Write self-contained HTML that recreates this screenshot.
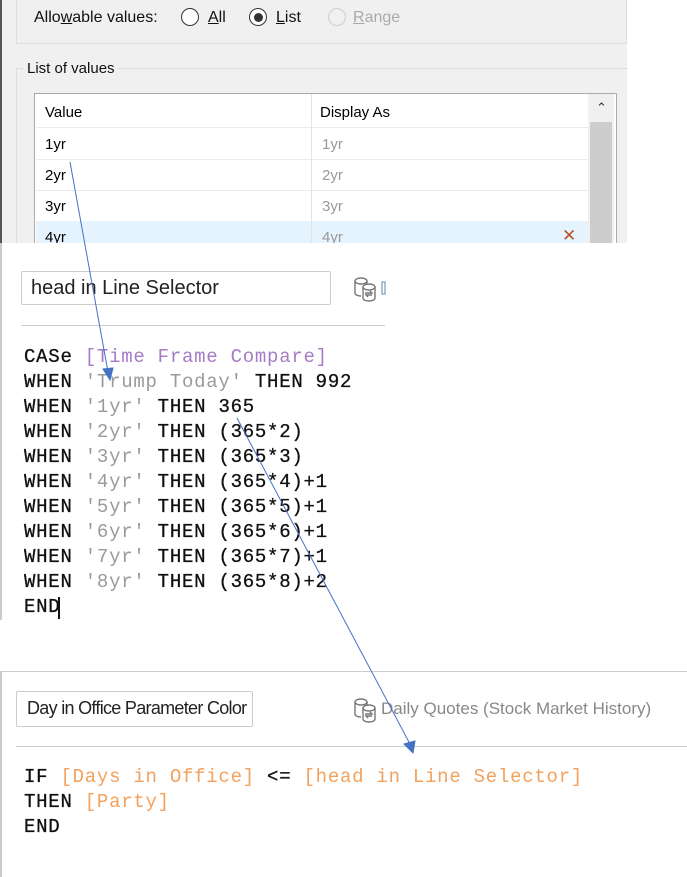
<!DOCTYPE html>
<html><head><style>
body{margin:0;width:687px;height:877px;background:#fff;position:relative;overflow:hidden;font-family:"Liberation Sans",sans-serif}
.a{position:absolute}
.code{font-family:"Liberation Mono",monospace;font-size:19px;letter-spacing:0.75px;line-height:25px;white-space:pre;color:#111;-webkit-text-stroke:0.3px #111}
.s{color:#9a9a9a;-webkit-text-stroke:0}.p{color:#a57cc4;-webkit-text-stroke:0}.o{color:#f4a15c;-webkit-text-stroke:0}
.row{position:absolute;left:36px;width:552px;height:31px;border-bottom:1px solid #eaeaea;font-size:15px}
.row span{position:absolute;top:8px}
</style></head><body>
<div class="a" style="left:0;top:0;width:627px;height:243px;background:#f0f0f0;border-left:2px solid #555;box-sizing:border-box"></div>
<div class="a" style="left:16px;top:0;width:611px;height:44px;border:1px solid #dcdcdc;border-top:none;box-sizing:border-box"></div>
<div class="a" style="left:34px;top:9px;font-size:16px;color:#111">Allo<u>w</u>able values:</div>
<div class="a" style="left:181px;top:8px;width:16px;height:16px;border:1.5px solid #333;border-radius:50%;background:#fff"></div>
<div class="a" style="left:208px;top:9px;font-size:16px;color:#111"><u>A</u>ll</div>
<div class="a" style="left:249px;top:8px;width:16px;height:16px;border:1.5px solid #333;border-radius:50%;background:#fff"></div>
<div class="a" style="left:254px;top:13px;width:9px;height:9px;border-radius:50%;background:#333"></div>
<div class="a" style="left:276px;top:9px;font-size:16px;color:#111"><u>L</u>ist</div>
<div class="a" style="left:328px;top:8px;width:16px;height:16px;border:1.5px solid #ccc;border-radius:50%"></div>
<div class="a" style="left:353px;top:9px;font-size:16px;color:#aaa"><u>R</u>ange</div>
<div class="a" style="left:16px;top:68px;width:611px;height:180px;border-left:1px solid #dcdcdc;border-top:1px solid #dcdcdc"></div>
<div class="a" style="left:24px;top:60px;font-size:15px;background:#f0f0f0;padding:0 3px;color:#111">List of values</div>
<div class="a" style="left:34px;top:93px;width:581px;height:160px;border:1px solid #aaa;background:#fff"></div>
<div class="a" style="left:588px;top:94px;width:26px;height:150px;background:#f0f0f0"></div>
<div class="a" style="left:590px;top:122px;width:22px;height:122px;background:#cdcdcd"></div>
<div class="a" style="left:596px;top:100px;font-size:13px;color:#333">&#8963;</div>
<div class="row" style="top:94px;height:33px"><span style="left:9px;top:10px">Value</span><span style="left:284px;top:10px">Display As</span></div>
<div class="row" style="top:128px"><span style="left:9px">1yr</span><span style="left:286px;color:#999">1yr</span></div>
<div class="row" style="top:159px"><span style="left:9px">2yr</span><span style="left:286px;color:#999">2yr</span></div>
<div class="row" style="top:190px"><span style="left:9px">3yr</span><span style="left:286px;color:#999">3yr</span></div>
<div class="row" style="top:221px;background:#e5f3ff"><span style="left:9px">4yr</span><span style="left:286px;color:#999">4yr</span><span style="left:526px;color:#b5532a;font-size:17px;top:5px">✕</span></div>
<div class="a" style="left:311px;top:94px;width:1px;height:150px;background:#e3e3e3"></div>
<div class="a" style="left:0;top:243px;width:687px;height:634px;background:#fff"></div>
<div class="a" style="left:0;top:243px;width:2px;height:377px;background:#ccc"></div>
<div class="a" style="left:21px;top:271px;width:310px;height:34px;border:1px solid #ccc;border-radius:2px;box-sizing:border-box"></div>
<div class="a" style="left:31px;top:277px;font-size:20px;color:#222">head in Line Selector</div>
<div class="a" style="left:21px;top:325px;width:364px;height:1px;background:#ccc"></div>
<svg class="a" style="left:352px;top:276px" width="34" height="26" viewBox="0 0 34 26" fill="none" stroke="#777" stroke-width="1.4"><ellipse cx="9" cy="5" rx="6" ry="3"/><path d="M3 5v12c0 2 3 3 6 3M15 5v3"/><ellipse cx="17" cy="11" rx="6" ry="3"/><path d="M11 11v11c0 2 3 3 6 3s6-1 6-3V11M13 17h7l-2-2M20 19h-6l2 2"/><rect x="30" y="6" width="3" height="12" stroke="#8ab"/></svg>
<div class="a code" style="left:24px;top:345px">CASe <span class="p">[Time Frame Compare]</span>
WHEN <span class="s">'Trump Today'</span> THEN 992
WHEN <span class="s">'1yr'</span> THEN 365
WHEN <span class="s">'2yr'</span> THEN (365*2)
WHEN <span class="s">'3yr'</span> THEN (365*3)
WHEN <span class="s">'4yr'</span> THEN (365*4)+1
WHEN <span class="s">'5yr'</span> THEN (365*5)+1
WHEN <span class="s">'6yr'</span> THEN (365*6)+1
WHEN <span class="s">'7yr'</span> THEN (365*7)+1
WHEN <span class="s">'8yr'</span> THEN (365*8)+2
END</div>
<div class="a" style="left:58px;top:597px;width:2px;height:22px;background:#111"></div>
<div class="a" style="left:0;top:671px;width:687px;height:1px;background:#ccc"></div>
<div class="a" style="left:0;top:671px;width:2px;height:206px;background:#ccc"></div>
<div class="a" style="left:16px;top:691px;width:237px;height:36px;border:1px solid #ccc;border-radius:2px;box-sizing:border-box"></div>
<div class="a" style="left:27px;top:698px;font-size:18px;letter-spacing:-0.7px;color:#222">Day in Office Parameter Color</div>
<svg class="a" style="left:352px;top:697px" width="30" height="26" viewBox="0 0 30 26" fill="none" stroke="#777" stroke-width="1.4"><ellipse cx="9" cy="5" rx="6" ry="3"/><path d="M3 5v12c0 2 3 3 6 3M15 5v3"/><ellipse cx="17" cy="11" rx="6" ry="3"/><path d="M11 11v11c0 2 3 3 6 3s6-1 6-3V11M13 17h7l-2-2M20 19h-6l2 2"/></svg>
<div class="a" style="left:381px;top:699px;font-size:17px;color:#888">Daily Quotes (Stock Market History)</div>
<div class="a" style="left:16px;top:746px;width:671px;height:1px;background:#ccc"></div>
<div class="a code" style="left:24px;top:765px">IF <span class="o">[Days in Office]</span> &lt;= <span class="o">[head in Line Selector]</span>
THEN <span class="o">[Party]</span>
END</div>
<svg class="a" style="left:0;top:0" width="687" height="877"><g stroke="#4472c4" stroke-width="1" fill="#4472c4"><line x1="70" y1="162" x2="108" y2="372"/><polygon points="103,369 113,368 110,380"/><line x1="237" y1="418" x2="410" y2="744"/><polygon points="404,744 415,741 413,753"/></g></svg>
</body></html>
